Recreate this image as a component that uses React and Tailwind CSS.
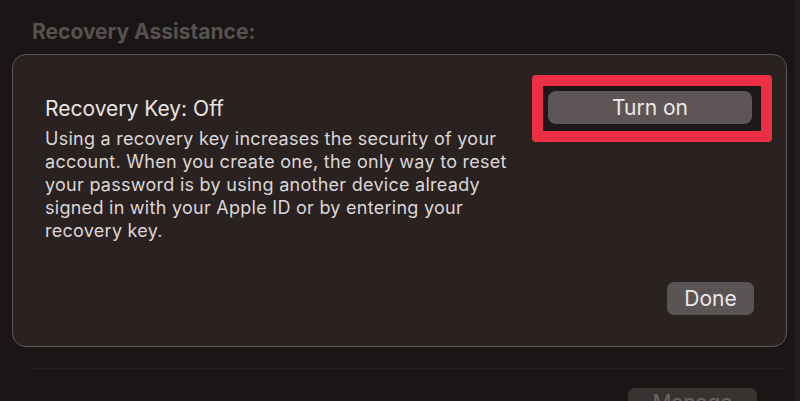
export default function App() {
  return (
    <div
      className="relative w-[800px] h-[401px] overflow-hidden bg-[#1b1616]"
      style={{ fontFamily: 'Inter, "Noto Sans", sans-serif' }}
    >
      <div className="absolute right-0 top-0 h-full w-[5px] bg-[#221d1d]" />
      <div className="pl-[32px] pt-[18px] pr-[13px]">
        <h2 className="text-[21px] leading-[27px] font-bold text-[#57514f]">
          Recovery Assistance:
        </h2>

        {/* Panel */}
        <div className="-ml-[20px] mt-[9px] h-[293px] rounded-[14px] border border-[#5e5857] bg-[#2a2221] pl-[32px] pr-[32px] pt-[20px] pb-[31px] flex flex-col">
          <div className="flex justify-between">
            <div className="pt-[21px]">
              <p className="text-[21px] leading-[25px] text-[#e9e4e3]">Recovery Key: Off</p>
              <p className="mt-[6px] text-[18px] leading-[23px] tracking-[0.015em] text-[#dcd7d6]">
                Using a recovery key increases the security of your
                <br />
                account. When you create one, the only way to reset
                <br />
                your password is by using another device already
                <br />
                signed in with your Apple ID or by entering your
                <br />
                recovery key.
              </p>
            </div>
            <div className="-mr-[18px] h-[67px] w-[240px] shrink-0 rounded-[4px] border-[11px] border-[#ec2f44] bg-[#1e1818] pl-[5px] pr-[9px] pt-[5px]">
              <button className="h-[33px] w-full rounded-[8px] bg-[#5e5656] text-[21px] leading-[33px] text-[#ece8e7]">
                Turn on
              </button>
            </div>
          </div>
          <div className="mt-auto flex justify-end">
            <button className="h-[33px] w-[87px] rounded-[7px] bg-[#5b5454] text-[21px] leading-[33px] text-[#ece8e7]">
              Done
            </button>
          </div>
        </div>

        <div className="mt-[21px] h-px bg-[#221e1d]" />
        <div className="mt-[19px] flex justify-end pr-[30px]">
          <div className="h-[30px] w-[129px] rounded-[7px] bg-[#383231] text-center text-[21px] leading-[30px] text-[#6a6463]">
            Manage
          </div>
        </div>
      </div>
    </div>
  );
}
